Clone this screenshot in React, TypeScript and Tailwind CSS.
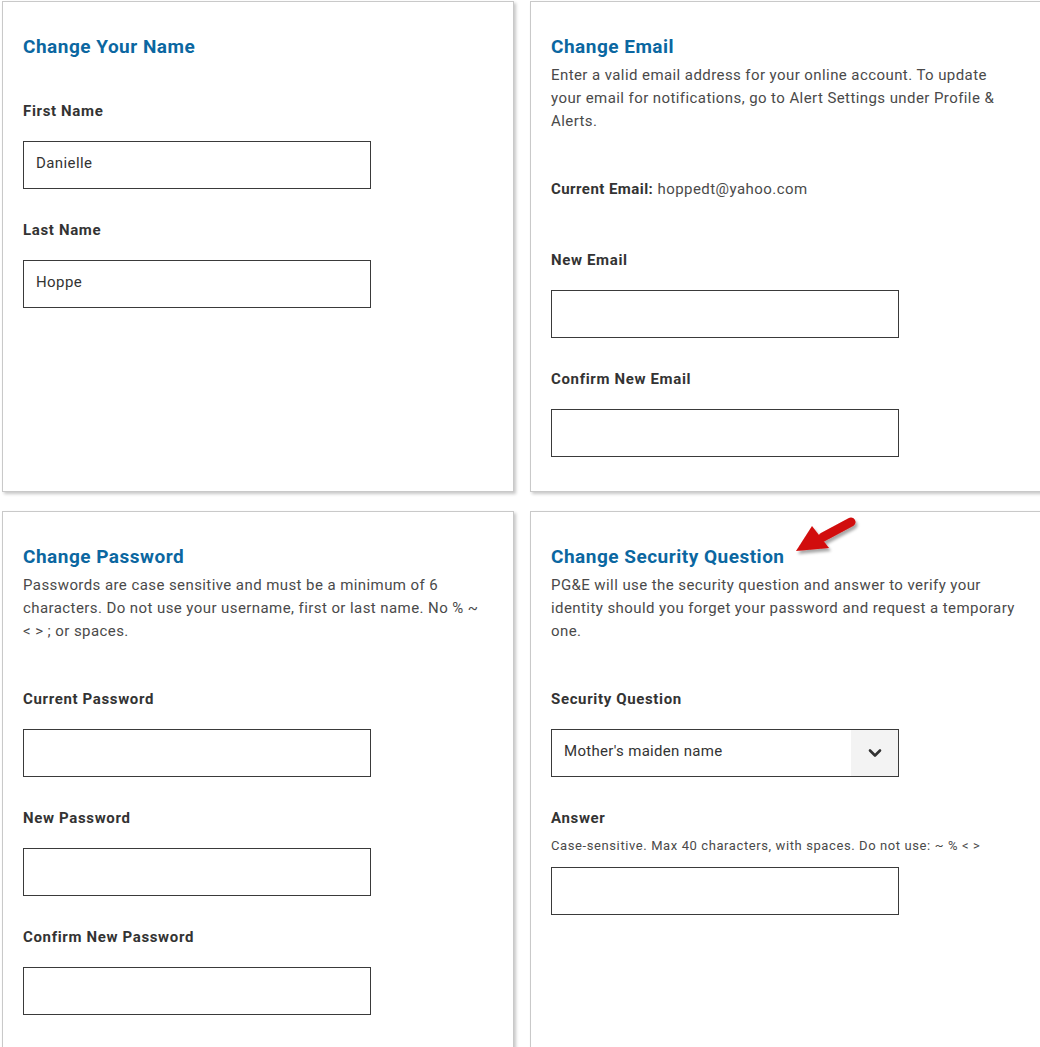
import React from "react";

const font = { fontFamily: "Roboto, 'Liberation Sans', sans-serif" };

function Label({ children, className = "" }: { children: React.ReactNode; className?: string }) {
  return (
    <div className={`text-[15px] leading-[20px] font-bold text-[#333333] tracking-[0.65px] ${className}`}>{children}</div>
  );
}

function Field({ label, value, first }: { label: string; value?: string; first?: boolean }) {
  return (
    <div className={first ? "" : "mt-[31px]"}>
      <Label>{label}</Label>
      <div className="mt-[20px] w-[348px] h-[48px] border border-[#3a3a3a] flex items-center px-[12px] pb-[3px] text-[15px] text-[#333333] tracking-[0.4px]">
        {value}
      </div>
    </div>
  );
}

function Card({ children, h }: { children: React.ReactNode; h: string }) {
  return (
    <div
      className={`w-[512px] ${h} bg-white border border-[#c9c9c9] shadow-[2px_2px_3px_rgba(0,0,0,0.22)] pl-[20px] pr-[23px] pt-[32px] relative`}
    >
      {children}
    </div>
  );
}

function Heading({ children }: { children: React.ReactNode }) {
  return <h2 className="text-[19px] leading-[26px] font-bold text-[#0b67a1] tracking-[0.5px]">{children}</h2>;
}

function Desc({ children }: { children: React.ReactNode }) {
  return <p className="mt-[4px] text-[15px] leading-[23px] text-[#4a4a4a] tracking-[0.42px]">{children}</p>;
}

export default function App() {
  return (
    <div className="bg-white min-h-[1047px] overflow-hidden" style={font}>
      <div className="pl-[2px] pt-[1px] grid grid-cols-[512px_512px] gap-x-[16px] gap-y-[19px] w-[1100px]">
        <Card h="h-[491px]">
          <Heading>Change Your Name</Heading>
          <div className="mt-[41px]">
            <Field label="First Name" value="Danielle" first />
            <Field label="Last Name" value="Hoppe" />
          </div>
        </Card>
        <Card h="h-[491px]">
          <Heading>Change Email</Heading>
          <Desc>
            Enter a valid email address for your online account. To update your email for notifications, go to
            Alert Settings under Profile &amp; Alerts.
          </Desc>
          <div className="mt-[46px] text-[15px] leading-[20px] text-[#4a4a4a] tracking-[0.45px]">
            <span className="font-bold text-[#333333]">Current Email:</span> hoppedt@yahoo.com
          </div>
          <div className="mt-[51px]">
            <Field label="New Email" first />
            <Field label="Confirm New Email" />
          </div>
        </Card>
        <Card h="h-[560px]">
          <Heading>Change Password</Heading>
          <Desc>
            Passwords are case sensitive and must be a minimum of 6 characters. Do not use your username, first or
            last name. No % ~ &lt; &gt; ; or spaces.
          </Desc>
          <div className="mt-[46px]">
            <Field label="Current Password" first />
            <Field label="New Password" />
            <Field label="Confirm New Password" />
          </div>
        </Card>
        <Card h="h-[560px]">
          <Heading>Change Security Question</Heading>
          <Desc>
            PG&amp;E will use the security question and answer to verify your identity should you forget your
            password and request a temporary one.
          </Desc>
          <div className="mt-[46px]">
            <Label>Security Question</Label>
            <div className="mt-[20px] w-[348px] h-[48px] border border-[#3a3a3a] flex text-[15px] text-[#333333] tracking-[0.3px]">
              <div className="flex-1 flex items-center px-[12px] pb-[3px]">Mother's maiden name</div>
              <div className="w-[47px] bg-[#f3f3f3] flex items-center justify-center">
                <svg width="14" height="10" viewBox="0 0 14 10">
                  <path d="M2 2.5 L7 7.5 L12 2.5" fill="none" stroke="#333" strokeWidth="2.6" strokeLinecap="round" strokeLinejoin="round" />
                </svg>
              </div>
            </div>
            <Label className="mt-[31px]">Answer</Label>
            <div className="mt-[9px] text-[13px] leading-[18px] text-[#4a4a4a] tracking-[0.6px]">
              Case-sensitive. Max 40 characters, with spaces. Do not use: ~ % &lt; &gt;
            </div>
            <div className="mt-[12px] w-[348px] h-[48px] border border-[#3a3a3a]" />
          </div>
          <svg className="absolute left-[260px] top-[2px]" width="72" height="52" viewBox="0 0 72 52">
            <defs>
              <filter id="sh" x="-20%" y="-20%" width="150%" height="160%">
                <feDropShadow dx="2" dy="3" stdDeviation="1.8" floodColor="#000" floodOpacity="0.35" />
              </filter>
            </defs>
            <g filter="url(#sh)">
              <line x1="60" y1="8" x2="32" y2="23" stroke="#d10a0a" strokeWidth="9" strokeLinecap="round" />
              <polygon points="5,37 21,12 38,34" fill="#d10a0a" />
            </g>
          </svg>
        </Card>
      </div>
    </div>
  );
}
